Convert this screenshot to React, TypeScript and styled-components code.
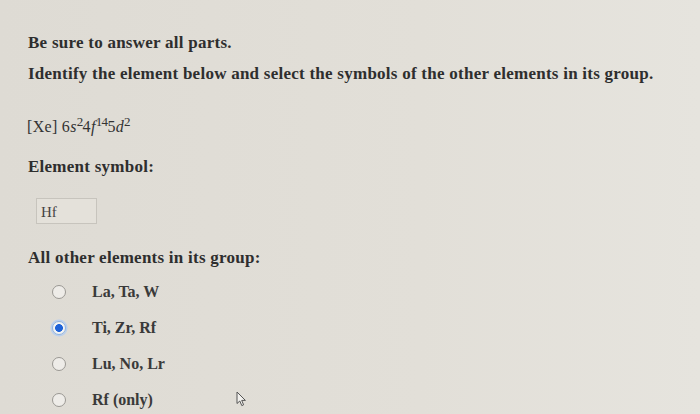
import styled, { createGlobalStyle } from "styled-components";

const GlobalStyle = createGlobalStyle`
  html, body {
    margin: 0;
    padding: 0;
    background: #e0ddd6;
  }
  body {
    font-family: "Liberation Serif", "Times New Roman", serif;
    color: #2e2e2e;
  }
`;

const Page = styled.div`
  position: relative;
  width: 700px;
  height: 414px;
  overflow: hidden;
  box-sizing: border-box;
  padding: 33px 0 0 28px;
  background: linear-gradient(90deg, #dedbd4 0%, #e2dfd8 60%, #e6e4de 100%);
`;

const Heading = styled.p<{ $gap?: number }>`
  margin: 0 0 ${(p) => p.$gap ?? 0}px;
  font-size: 17px;
  line-height: 20px;
  font-weight: bold;
  letter-spacing: 0.25px;
`;

const Config = styled.p`
  margin: 0 0 20px -1px;
  font-size: 16px;
  line-height: 20px;
  letter-spacing: 0.3px;
  color: #333;

  i {
    font-style: italic;
  }

  sup {
    font-size: 13px;
    line-height: 0;
    vertical-align: 6px;
    letter-spacing: -0.6px;
  }
`;

const AnswerBox = styled.div`
  box-sizing: border-box;
  width: 61px;
  height: 26px;
  margin: 21px 0 24px 8px;
  padding: 4px 0 0 4px;
  border: 1px solid #c7c4bd;
  background: #e4e1da;
  font-size: 15px;
  line-height: 18px;
  color: #444;
`;

const OptionList = styled.div`
  display: flex;
  flex-direction: column;
  margin: 6px 0 0 24px;
`;

const Option = styled.label`
  display: flex;
  align-items: center;
  height: 36px;
  gap: 26px;
  font-size: 16px;
  font-weight: bold;
  color: #3a3a3a;
`;

const Radio = styled.span<{ $checked?: boolean }>`
  box-sizing: border-box;
  width: 14px;
  height: 14px;
  border-radius: 50%;
  border: ${(p) => (p.$checked ? "1px solid #8fb3df" : "1.5px solid #9a9893")};
  background: ${(p) => (p.$checked ? "radial-gradient(circle, #1f63d8 0 3.6px, #f4f4f2 4.2px)" : "#eeece8")};
  box-shadow: ${(p) => (p.$checked ? "0 0 0 1.5px #b9cfee" : "none")};
`;

const Cursor = styled.svg`
  position: absolute;
  left: 236px;
  top: 391px;
`;

const options = [
  { label: "La, Ta, W", checked: false },
  { label: "Ti, Zr, Rf", checked: true },
  { label: "Lu, No, Lr", checked: false },
  { label: "Rf (only)", checked: false },
];

const App = () => {
  return (
    <>
      <GlobalStyle />
      <Page>
        <Heading $gap={11}>Be sure to answer all parts.</Heading>
        <Heading $gap={33}>
          Identify the element below and select the symbols of the other elements in its group.
        </Heading>
        <Config>
          [Xe] 6<i>s</i>
          <sup>2</sup>4<i>f</i>
          <sup>14</sup>5<i>d</i>
          <sup>2</sup>
        </Config>
        <Heading>Element symbol:</Heading>
        <AnswerBox>Hf</AnswerBox>
        <Heading>All other elements in its group:</Heading>
        <OptionList>
          {options.map((o) => (
            <Option key={o.label}>
              <Radio $checked={o.checked} />
              {o.label}
            </Option>
          ))}
        </OptionList>
        <Cursor width="12" height="16" viewBox="0 0 12 16">
          <path
            d="M1 1 L1 12.5 L3.8 10 L5.8 14.6 L7.6 13.8 L5.7 9.4 L9.4 9.4 Z"
            fill="#f2f1ee"
            stroke="#555"
            strokeWidth="1"
            strokeLinejoin="round"
          />
        </Cursor>
      </Page>
    </>
  );
};

export default App;
